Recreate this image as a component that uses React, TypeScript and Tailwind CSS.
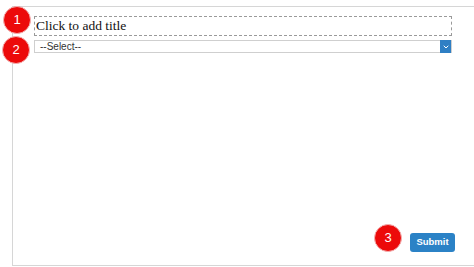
import { ChevronDown } from "lucide-react";

function Step({ n, className }: { n: number; className: string }) {
  return (
    <div
      className={`absolute flex h-[28px] w-[28px] items-center justify-center rounded-full border border-[#f3b0b0] bg-[#ec0a0a] text-[13px] text-white ${className}`}
      style={{ fontFamily: '"Liberation Sans", Arial, sans-serif' }}
    >
      {n}
    </div>
  );
}

export default function App() {
  return (
    <div className="relative h-[267px] w-[474px] overflow-hidden bg-white">
      <div className="ml-[12px] mt-[6px] flex h-[260px] w-[470px] flex-col border border-[#d6d6d6] pl-[21px] pt-[9px]">
        <div
          className="flex h-[20px] w-[418px] items-center border border-dashed border-[#9a9a9a] px-[1px] text-[13.5px] leading-none text-[#111]"
          style={{ fontFamily: '"Liberation Serif", "Times New Roman", serif' }}
        >
          Click to add title
        </div>

        <div
          className="mt-[4px] flex h-[13px] w-[418px] items-center border border-[#cfcfcf] text-[10px] leading-none text-[#333]"
          style={{ fontFamily: '"Liberation Sans", Arial, sans-serif' }}
        >
          <span className="flex-1 pl-[5px]">--Select--</span>
          <span className="flex h-[13px] w-[11px] items-center justify-center bg-[#2f7fc4]">
            <ChevronDown className="h-[8px] w-[8px] text-white" strokeWidth={3} />
          </span>
        </div>

        <div className="mt-auto mb-[13px] flex w-[421px] justify-end">
          <button
            className="h-[19px] w-[45px] rounded-[3px] bg-[#2b82c6] text-[9.5px] font-bold text-white"
            style={{ fontFamily: '"Liberation Sans", Arial, sans-serif' }}
          >
            Submit
          </button>
        </div>
      </div>

      <Step n={1} className="left-[3px] top-[6px]" />
      <Step n={2} className="left-[2px] top-[36px]" />
      <Step n={3} className="left-[374px] top-[224px]" />
    </div>
  );
}
